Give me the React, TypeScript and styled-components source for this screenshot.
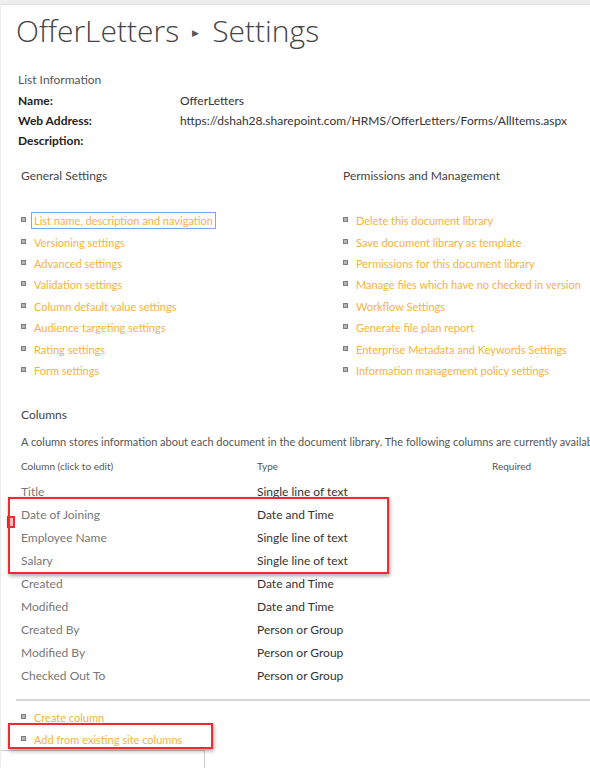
import React from "react";
import styled, { createGlobalStyle } from "styled-components";

const GlobalStyle = createGlobalStyle`
  body {
    margin: 0;
    background: #fff;
    font-family: Lato, "Liberation Sans", sans-serif;
    color: #444;
  }
`;

const Frame = styled.div`
  width: 590px;
  height: 768px;
  overflow: hidden;
  border-left: 1px solid #ececec;
  box-sizing: border-box;
`;

const TopStrip = styled.div`
  height: 4px;
  background: #eeeeee;
  border-bottom: 1px solid #e2e2e2;
`;

const Page = styled.div`
  padding-left: 20px;
`;

const Title = styled.h1`
  margin: 4px 0 0 -5px;
  height: 42px;
  display: flex;
  align-items: center;
  gap: 13px;
  font-family: "Open Sans", Lato, sans-serif;
  font-weight: 300;
  font-size: 30px;
  color: #444;
  white-space: nowrap;
`;

const Crumb = styled.span`
  font-size: 9px;
  color: #555;
  margin-top: 4px;
`;

const InfoHeading = styled.div`
  margin: 19px 0 0 -3px;
  line-height: 20px;
  font-size: 12px;
  color: #555;
`;

const InfoGrid = styled.div`
  margin-left: -3px;
  display: grid;
  grid-template-columns: 162px 1fr;
  grid-auto-rows: 20px;
  align-items: center;
  font-size: 12px;
`;

const InfoLabel = styled.div`
  font-weight: 700;
  color: #222;
`;

const InfoValue = styled.div`
  color: #333;
  white-space: nowrap;
`;

const SettingsGrid = styled.div`
  margin-top: 16px;
  display: grid;
  grid-template-columns: 322px 1fr;
`;

const SectionTitle = styled.div<{ $gap?: number }>`
  line-height: 20px;
  font-size: 12px;
  color: #444;
  margin-bottom: ${({ $gap }) => $gap ?? 0}px;
`;

const LinkList = styled.ul`
  list-style: none;
  margin: 0;
  padding: 0;
`;

const LinkItem = styled.li<{ $h: number; $marked?: boolean }>`
  position: relative;
  height: ${({ $h }) => $h}px;
  display: flex;
  align-items: center;
  white-space: nowrap;

  ${({ $marked }) =>
    $marked &&
    `
    &::after {
      content: "";
      position: absolute;
      left: -13px;
      top: -5px;
      width: 201px;
      height: 22px;
      border: 2px solid #ee2a33;
      box-shadow: 1px 2px 4px rgba(0, 0, 0, 0.35);
      pointer-events: none;
    }
  `}
`;

const Bullet = styled.span`
  width: 5px;
  height: 5px;
  margin-top: -2px;
  margin-right: 7px;
  background: #b5b5b5;
  border: 1px solid #7c7c7c;
  box-sizing: border-box;
  flex: none;
`;

const Link = styled.a<{ $focused?: boolean }>`
  font-size: 11px;
  color: #f6b23e;
  text-decoration: none;
  padding: 0 1px;
  outline: ${({ $focused }) => ($focused ? "1px solid #7aa6ea" : "none")};
  outline-offset: 1px;
  cursor: pointer;
`;

const ColumnsTitle = styled(SectionTitle)`
  margin-top: 24px;
`;

const Description = styled.div`
  margin-top: 7px;
  line-height: 20px;
  font-size: 11px;
  color: #555;
  white-space: nowrap;
`;

const TableRow = styled.div<{ $head?: boolean }>`
  display: grid;
  grid-template-columns: 236px 235px 1fr;
  height: ${({ $head }) => ($head ? 20 : 23)}px;
  align-items: center;
  font-size: ${({ $head }) => ($head ? 10 : 12)}px;
  white-space: nowrap;
`;

const TableHead = styled(TableRow)`
  margin-top: 4px;
  margin-bottom: 4px;
  color: #555;
`;

const ColName = styled.div`
  color: #777;
`;

const ColType = styled.div`
  color: #333;
`;

const Highlight = styled.div`
  position: relative;

  &::after {
    content: "";
    position: absolute;
    left: -13px;
    top: -6px;
    width: 377px;
    bottom: -2px;
    border: 2px solid #ee2a33;
    box-shadow: 1px 2px 4px rgba(0, 0, 0, 0.35);
    pointer-events: none;
  }

  &::before {
    content: "";
    position: absolute;
    left: -13px;
    top: 14px;
    width: 4px;
    height: 8px;
    background: #f3c0c0;
    border: 1px solid #ee2a33;
    box-shadow: 0 0 0 1px #ee2a33;
  }
`;

const Separator = styled.hr`
  margin: 12px 0 5px -5px;
  border: none;
  border-top: 2px solid #d6d6d6;
`;

const BottomFrame = styled.div`
  margin-left: -21px;
  width: 204px;
  height: 20px;
  border-top: 1px solid #cfcfcf;
  border-right: 1px solid #cfcfcf;
`;

const general = [
  "List name, description and navigation",
  "Versioning settings",
  "Advanced settings",
  "Validation settings",
  "Column default value settings",
  "Audience targeting settings",
  "Rating settings",
  "Form settings",
];

const permissions = [
  "Delete this document library",
  "Save document library as template",
  "Permissions for this document library",
  "Manage files which have no checked in version",
  "Workflow Settings",
  "Generate file plan report",
  "Enterprise Metadata and Keywords Settings",
  "Information management policy settings",
];

const columns: [string, string][] = [
  ["Title", "Single line of text"],
  ["Date of Joining", "Date and Time"],
  ["Employee Name", "Single line of text"],
  ["Salary", "Single line of text"],
  ["Created", "Date and Time"],
  ["Modified", "Date and Time"],
  ["Created By", "Person or Group"],
  ["Modified By", "Person or Group"],
  ["Checked Out To", "Person or Group"],
];

const Row = ({ col }: { col: [string, string] }) => (
  <TableRow>
    <ColName>{col[0]}</ColName>
    <ColType>{col[1]}</ColType>
    <div />
  </TableRow>
);

export default function App() {
  return (
    <Frame>
      <GlobalStyle />
      <TopStrip />
      <Page>
        <Title>
          OfferLetters <Crumb>▶</Crumb> Settings
        </Title>

        <InfoHeading>List Information</InfoHeading>
        <InfoGrid>
          <InfoLabel>Name:</InfoLabel>
          <InfoValue>OfferLetters</InfoValue>
          <InfoLabel>Web Address:</InfoLabel>
          <InfoValue>https://dshah28.sharepoint.com/HRMS/OfferLetters/Forms/AllItems.aspx</InfoValue>
          <InfoLabel>Description:</InfoLabel>
          <InfoValue />
        </InfoGrid>

        <SettingsGrid>
          <div>
            <SectionTitle $gap={24}>General Settings</SectionTitle>
            <LinkList>
              {general.map((g, i) => (
                <LinkItem key={g} $h={21.4}>
                  <Bullet />
                  <Link $focused={i === 0}>{g}</Link>
                </LinkItem>
              ))}
            </LinkList>
          </div>
          <div>
            <SectionTitle $gap={24}>Permissions and Management</SectionTitle>
            <LinkList>
              {permissions.map((p) => (
                <LinkItem key={p} $h={21.4}>
                  <Bullet />
                  <Link>{p}</Link>
                </LinkItem>
              ))}
            </LinkList>
          </div>
        </SettingsGrid>

        <ColumnsTitle>Columns</ColumnsTitle>
        <Description>
          A column stores information about each document in the document library. The following columns are currently available in this document library:
        </Description>

        <TableHead $head>
          <div>Column (click to edit)</div>
          <div>Type</div>
          <div>Required</div>
        </TableHead>
        <Row col={columns[0]} />
        <Highlight>
          {columns.slice(1, 4).map((c) => (
            <Row key={c[0]} col={c} />
          ))}
        </Highlight>
        {columns.slice(4).map((c) => (
          <Row key={c[0]} col={c} />
        ))}

        <Separator />
        <LinkList>
          <LinkItem $h={22}>
            <Bullet />
            <Link>Create column</Link>
          </LinkItem>
          <LinkItem $h={22} $marked>
            <Bullet />
            <Link>Add from existing site columns</Link>
          </LinkItem>
        </LinkList>
        <BottomFrame />
      </Page>
    </Frame>
  );
}
